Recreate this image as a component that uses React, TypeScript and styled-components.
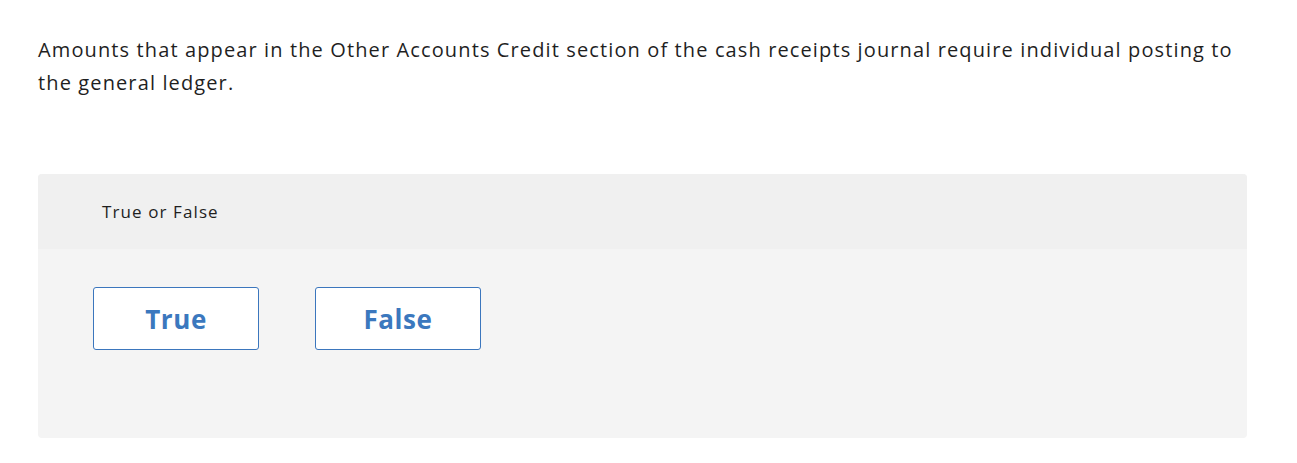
import React from "react";
import styled, { createGlobalStyle } from "styled-components";

const Global = createGlobalStyle`
  html, body { margin: 0; padding: 0; background: #fff; }
  body { font-family: "Open Sans", Lato, sans-serif; color: #1a1a1a; }
`;

const Page = styled.div`
  padding: 33px 50px 0 38px;
`;

const Prompt = styled.p`
  margin: 0;
  font-size: 20px;
  line-height: 33px;
  letter-spacing: 1.12px;
  color: #1f1f1f;
`;

const Panel = styled.section`
  margin-top: 75px;
  width: 1209px;
  border-radius: 4px;
  overflow: hidden;
  background: #f4f4f4;
`;

const PanelHeader = styled.div`
  height: 75px;
  background: #f0f0f0;
  display: flex;
  align-items: center;
  padding-left: 64px;
  font-size: 17px;
  letter-spacing: 1.1px;
  color: #1f1f1f;
`;

const Choices = styled.div`
  display: flex;
  gap: 56px;
  padding: 38px 0 88px 55px;
`;

const Choice = styled.button`
  width: 166px;
  height: 63px;
  background: #fff;
  border: 1px solid #3b76bd;
  border-radius: 3px;
  font-family: "Open Sans", Lato, sans-serif;
  font-weight: 700;
  font-size: 26px;
  letter-spacing: 0.6px;
  color: #3b78be;
  cursor: pointer;
`;

export default function App() {
  return (
    <>
      <Global />
      <Page>
        <Prompt>
          Amounts that appear in the Other Accounts Credit section of the cash receipts journal require individual posting to the general ledger.
        </Prompt>
        <Panel>
          <PanelHeader>True or False</PanelHeader>
          <Choices>
            <Choice>True</Choice>
            <Choice>False</Choice>
          </Choices>
        </Panel>
      </Page>
    </>
  );
}
